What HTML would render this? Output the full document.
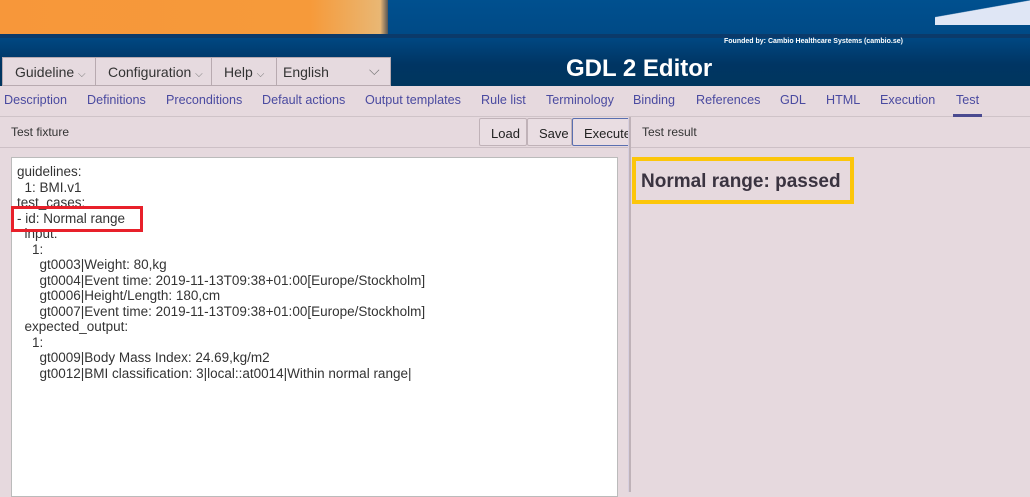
<!DOCTYPE html>
<html><head><style>
*{box-sizing:border-box;margin:0;padding:0}
body{width:1030px;height:492px;overflow:hidden;background:#e6d9de;font-family:"Liberation Sans",sans-serif;position:relative}
.hdr{position:absolute;left:0;top:0;width:1030px;height:86px;background:linear-gradient(180deg,#00508f 0%,#004a86 40%,#003563 75%,#00365e 100%)}
.orange{position:absolute;left:0;top:0;width:388px;height:34px;background:linear-gradient(90deg,#f7973a 0%,#f69a3a 80%,#e9b774 98%,#555 100%)}
.band{position:absolute;left:0;top:34px;width:1030px;height:4px;background:#0b3a6a}
.found{position:absolute;left:724px;top:38px;font-size:7px;color:#fff;font-weight:bold}
.title{position:absolute;left:566px;top:55px;font-size:24px;color:#fff;font-weight:bold}
.wedge{position:absolute;left:935px;top:0;width:95px;height:25px;background:linear-gradient(170deg,transparent 40%,#dfe6f5 42%)}
.menu{position:absolute;top:57px;height:29px;background:#e6dadf;border:1px solid #b8aab0;font-size:14px;color:#333;padding:6px 0 0 12px}
.tabs{position:absolute;top:86px;left:0;width:1030px;height:31px;border-bottom:1px solid #cfc3c8;font-size:12.6px;color:#4a4aa0}
.tabs span{position:absolute;top:7px}
.ph{position:absolute;top:117px;height:31px;border-bottom:1px solid #cdc0c6;font-size:12px;color:#333;padding:8px 0 0 11px}
.btn{position:absolute;top:118px;height:28px;border:1px solid #c0b2b8;background:#e9dde2;font-size:13px;color:#222;padding:7px 0 0 11px;border-radius:2px}
.ta{position:absolute;left:11px;top:157px;width:607px;height:340px;background:#fff;border:1px solid #bbb;font-size:13.5px;color:#333;line-height:15.5px;padding:6px 0 0 5px;white-space:pre}
</style></head><body>
<div class="hdr"></div>
<div class="orange"></div>
<div class="band"></div>
<div class="wedge"></div>
<div class="found">Founded by: Cambio Healthcare Systems (cambio.se)</div>
<div class="title">GDL 2 Editor</div>
<div class="menu" style="left:2px;width:94px">Guideline <span style="font-size:10px;color:#777">⌵</span></div>
<div class="menu" style="left:95px;width:117px">Configuration <span style="font-size:10px;color:#777">⌵</span></div>
<div class="menu" style="left:211px;width:66px">Help <span style="font-size:10px;color:#777">⌵</span></div>
<div class="menu" style="left:276px;width:115px;padding-left:6px">English <span style="position:absolute;left:92px;top:4px;color:#777;font-size:14px">⌵</span></div>
<div class="tabs">
<span style="left:4px">Description</span><span style="left:87px">Definitions</span><span style="left:166px">Preconditions</span><span style="left:262px">Default actions</span><span style="left:365px">Output templates</span><span style="left:481px">Rule list</span><span style="left:546px">Terminology</span><span style="left:633px">Binding</span><span style="left:696px">References</span><span style="left:780px">GDL</span><span style="left:826px">HTML</span><span style="left:880px">Execution</span><span style="left:956px">Test</span>
<div style="position:absolute;left:953px;top:28px;width:29px;height:3px;background:#4a4a90"></div>
</div>
<div class="ph" style="left:0;width:628px">Test fixture</div>
<div class="btn" style="left:479px;width:48px">Load</div>
<div class="btn" style="left:527px;width:45px">Save</div>
<div class="btn" style="left:572px;width:58px;border-color:#5a6fb0;overflow:hidden;white-space:nowrap">Execute</div>
<div style="position:absolute;left:628px;top:117px;width:3px;height:375px;background:#bfb2b8;border-left:1px solid #d8d0e0"></div>
<div class="ph" style="left:631px;width:399px">Test result</div>
<div class="ta">guidelines:
  1: BMI.v1
test_cases:
- id: Normal range
  input:
    1:
      gt0003|Weight: 80,kg
      gt0004|Event time: 2019-11-13T09:38+01:00[Europe/Stockholm]
      gt0006|Height/Length: 180,cm
      gt0007|Event time: 2019-11-13T09:38+01:00[Europe/Stockholm]
  expected_output:
    1:
      gt0009|Body Mass Index: 24.69,kg/m2
      gt0012|BMI classification: 3|local::at0014|Within normal range|</div>
<div style="position:absolute;left:11px;top:206px;width:132px;height:26px;border:3px solid #e8202a"></div>
<div style="position:absolute;left:632px;top:157px;width:222px;height:47px;border:4px solid #fcc60a"></div>
<div style="position:absolute;left:641px;top:171px;font-size:19px;font-weight:bold;color:#3a3340">Normal range: passed</div>
</body></html>
